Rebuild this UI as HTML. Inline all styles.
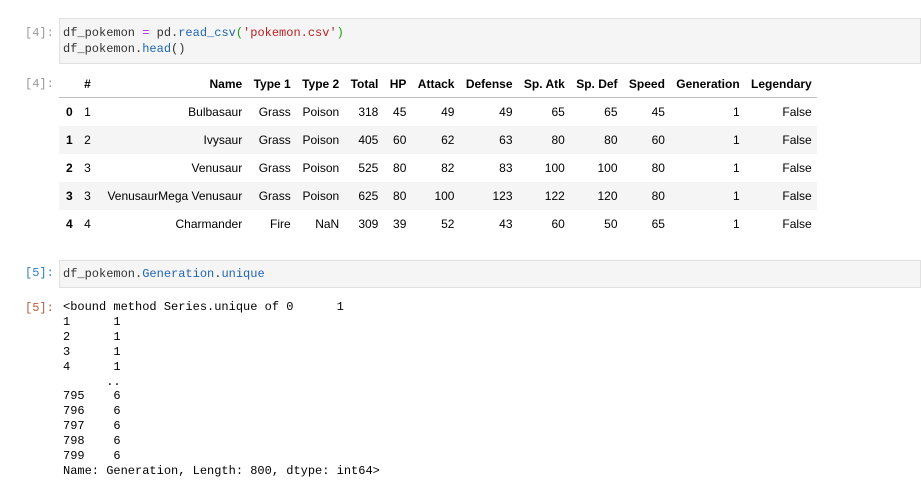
<!DOCTYPE html>
<html><head><style>
body{margin:0;width:921px;height:486px;background:#fff;position:relative;overflow:hidden;font-family:"Liberation Sans",sans-serif;}
.mono{font-family:"Liberation Mono",monospace;font-size:12px;}
.p{position:absolute;font-family:"Liberation Mono",monospace;font-size:12px;color:#999;}
.box{position:absolute;left:59px;right:0;background:#f5f5f5;border:1px solid #e0e0e0;}
.code{position:absolute;left:63px;line-height:16px;color:#333;white-space:pre;}
.kw{color:#aa22ff}.fn{color:#1f64b4}.st{color:#ba2121}.pa{color:#1a9a1a}
table{position:absolute;left:59px;top:70px;border-collapse:collapse;font-size:12px;color:#000;}
td,th{text-align:right;padding:0 5.7px;height:28px;white-space:nowrap;}
th{font-weight:bold;}
thead th{border-bottom:1px solid #bdbdbd;height:27px}
tbody tr:nth-child(even){background:#f5f5f5}
</style></head><body>
<div class="p" style="left:25px;top:26px">[4]:</div>
<div class="box" style="top:18px;height:44px"></div>
<div class="code mono" style="top:25px">df_pokemon <span class="kw">=</span> pd.<span class="fn">read_csv</span><span class="pa">(</span><span class="st">'pokemon.csv'</span><span class="pa">)</span>
df_pokemon.<span class="fn">head</span>()</div>
<div class="p" style="left:25px;top:77px">[4]:</div>
<table>
<thead><tr><th style="width:8px"></th><th style="width:12px;text-align:left">#</th><th style="width:122px">Name</th><th>Type 1</th><th>Type 2</th><th>Total</th><th>HP</th><th>Attack</th><th>Defense</th><th>Sp. Atk</th><th>Sp. Def</th><th>Speed</th><th>Generation</th><th>Legendary</th></tr></thead>
<tbody>
<tr><th>0</th><td style="text-align:left">1</td><td>Bulbasaur</td><td>Grass</td><td>Poison</td><td>318</td><td>45</td><td>49</td><td>49</td><td>65</td><td>65</td><td>45</td><td>1</td><td>False</td></tr>
<tr><th>1</th><td style="text-align:left">2</td><td>Ivysaur</td><td>Grass</td><td>Poison</td><td>405</td><td>60</td><td>62</td><td>63</td><td>80</td><td>80</td><td>60</td><td>1</td><td>False</td></tr>
<tr><th>2</th><td style="text-align:left">3</td><td>Venusaur</td><td>Grass</td><td>Poison</td><td>525</td><td>80</td><td>82</td><td>83</td><td>100</td><td>100</td><td>80</td><td>1</td><td>False</td></tr>
<tr><th>3</th><td style="text-align:left">3</td><td>VenusaurMega Venusaur</td><td>Grass</td><td>Poison</td><td>625</td><td>80</td><td>100</td><td>123</td><td>122</td><td>120</td><td>80</td><td>1</td><td>False</td></tr>
<tr><th>4</th><td style="text-align:left">4</td><td>Charmander</td><td>Fire</td><td>NaN</td><td>309</td><td>39</td><td>52</td><td>43</td><td>60</td><td>50</td><td>65</td><td>1</td><td>False</td></tr>
</tbody></table>
<div class="p" style="left:25px;top:266px;color:#307fc1">[5]:</div>
<div class="box" style="top:260px;height:26px"></div>
<div class="code mono" style="top:266px">df_pokemon.<span class="fn">Generation</span>.<span class="fn">unique</span></div>
<div class="p" style="left:25px;top:301px;color:#bf5b3d">[5]:</div>
<div class="code mono" style="top:300px;line-height:14.9px;color:#000">&lt;bound method Series.unique of 0      1
1      1
2      1
3      1
4      1
      ..
795    6
796    6
797    6
798    6
799    6
Name: Generation, Length: 800, dtype: int64&gt;</div>
</body></html>
